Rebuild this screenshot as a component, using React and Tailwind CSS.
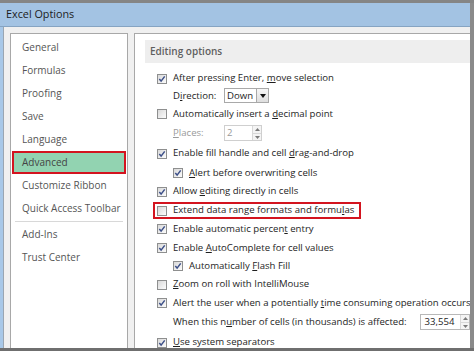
import React from "react";

function Box({ checked }) {
  return (
    <span className="w-[10px] h-[10px] border border-[#8e8f8f] bg-linear-to-br from-[#d9d9d9] to-[#fcfcfc] flex items-center justify-center shrink-0">
      {checked && (
        <svg width="8" height="8" viewBox="0 0 8 8">
          <path d="M1.3 4.1 L3.1 6.1 L6.7 1.4" fill="none" stroke="#3c4f88" strokeWidth="1.5" />
        </svg>
      )}
    </span>
  );
}

function Row({ h, checked, indent, children, extra }) {
  return (
    <div className={`relative flex items-center shrink-0 ${h} ${indent ? "pl-[16px]" : ""}`}>
      <Box checked={checked} />
      <span className="ml-[6px] whitespace-nowrap">{children}</span>
      {extra}
    </div>
  );
}

function Spin() {
  return (
    <div className="flex flex-col w-[9px] h-full border-l border-[#d8d8d8] bg-[#f4f4f4]">
      <div className="flex-1 flex items-center justify-center border-b border-[#d8d8d8]">
        <svg width="5" height="3" viewBox="0 0 5 3"><path d="M0 3 L2.5 0 L5 3 Z" fill="#7a7a7a" /></svg>
      </div>
      <div className="flex-1 flex items-center justify-center">
        <svg width="5" height="3" viewBox="0 0 5 3"><path d="M0 0 L2.5 3 L5 0 Z" fill="#7a7a7a" /></svg>
      </div>
    </div>
  );
}

const nav = ["General", "Formulas", "Proofing", "Save", "Language"];

export default function App() {
  return (
    <div className="w-[474px] h-[351px] overflow-hidden flex flex-col bg-[#f0f0f0] font-['Open_Sans',sans-serif]">
      <div className="h-[3px] bg-[#858585] shrink-0" />
      <div className="flex flex-1 min-h-0">
        <div className="flex-1 flex flex-col min-w-0">
          <div className="h-[24px] shrink-0 bg-[#a3c3e3] border-b border-[#86a4c2] flex items-center pl-[6px] text-[10.8px] text-[#1c1c1c]">
            Excel Options
          </div>
          <div className="flex flex-1 min-h-0">
            <div className="w-[3px] bg-[#a8c8e8] border-r border-[#9aa6b2] box-content" />
            <div className="flex flex-1 min-w-0 pl-[6px] pt-[6px] gap-[6px]">
              <div className="w-[118px] shrink-0 bg-white border border-b-0 border-[#a8a8a8] pt-[2px] px-[1px] text-[10px] text-[#555]">
                {nav.map((n) => (
                  <div key={n} className="h-[23px] flex items-center pl-[10px]">{n}</div>
                ))}
                <div className="h-[23px] flex items-center pl-[8px] bg-[#92d3b1] border-2 border-[#d3141f] text-[#444]">Advanced</div>
                <div className="h-[23px] flex items-center pl-[10px]">Customize Ribbon</div>
                <div className="h-[23px] flex items-center pl-[10px]">Quick Access Toolbar</div>
                <div className="mx-[3px] my-[1px] h-px bg-[#d8d8d8]" />
                <div className="h-[23px] flex items-center pl-[10px]">Add-Ins</div>
                <div className="h-[23px] flex items-center pl-[10px]">Trust Center</div>
              </div>
              <div className="flex-1 min-w-0 bg-white border border-r-0 border-b-0 border-[#a8a8a8] pt-[6px] pl-[10px] overflow-hidden text-[9.6px] text-[#1e1e1e]">
                <div className="h-[23px] bg-[#eeeeee] flex items-center pl-[5px] font-semibold text-[10px] text-[#5f5f5f]">
                  Editing options
                </div>
                <div className="pl-[12px] pt-[7px] flex flex-col">
                  <Row h="h-[17px]" checked>
                    After pressing Enter, <u>m</u>ove selection
                  </Row>
                  <div className="h-[17.5px] flex items-center pl-[16px] shrink-0">
                    <span className="w-[51px]">D<u>i</u>rection:</span>
                    <div className="w-[45px] h-[15px] border border-[#a9a9a9] flex items-center bg-white">
                      <span className="flex-1 pl-[2px]">Down</span>
                      <div className="w-[12px] h-full border-l border-[#a9a9a9] bg-linear-to-b from-[#f7f7f7] to-[#dedede] flex items-center justify-center">
                        <svg width="6" height="4" viewBox="0 0 6 4"><path d="M0 0 L3 4 L6 0 Z" fill="#111" /></svg>
                      </div>
                    </div>
                  </div>
                  <Row h="h-[18.5px]">
                    Automatically insert a <u>d</u>ecimal point
                  </Row>
                  <div className="h-[20.5px] flex items-center pl-[16px] shrink-0 text-[#9a9a9a]">
                    <span className="w-[51px]"><u>P</u>laces:</span>
                    <div className="w-[38px] h-[16px] border border-[#cfcfcf] flex items-center bg-white">
                      <span className="flex-1 pl-[2px]">2</span>
                      <Spin />
                    </div>
                  </div>
                  <Row h="h-[20px]" checked>
                    Enable fill handle and cell <u>d</u>rag-and-drop
                  </Row>
                  <Row h="h-[18.5px]" checked indent>
                    <u>A</u>lert before overwriting cells
                  </Row>
                  <Row h="h-[19px]" checked>
                    Allow <u>e</u>diting directly in cells
                  </Row>
                  <Row
                    h="h-[19px]"
                    extra={<div className="absolute left-[-4px] top-[1px] w-[208px] h-[17px] border-2 border-[#d3141f]" />}
                  >
                    Extend data range formats and formu<u>l</u>as
                  </Row>
                  <Row h="h-[18.5px]" checked>
                    Enable automatic percen<u>t</u> entry
                  </Row>
                  <Row h="h-[18.5px]" checked>
                    Enable <u>A</u>utoComplete for cell values
                  </Row>
                  <Row h="h-[18.5px]" checked indent>
                    Automatically <u>F</u>lash Fill
                  </Row>
                  <Row h="h-[18px]">
                    <u>Z</u>oom on roll with IntelliMouse
                  </Row>
                  <Row h="h-[18.5px]" checked>
                    Alert the user when a potentially <u>t</u>ime consuming operation occurs
                  </Row>
                  <div className="h-[20.5px] flex items-center pl-[16px] shrink-0">
                    <span className="w-[250px] whitespace-nowrap">When this n<u>u</u>mber of cells (in thousands) is affected:</span>
                    <div className="w-[50px] h-[16px] border border-[#b8b8b8] flex items-center bg-white">
                      <span className="flex-1 pl-[3px]">33,554</span>
                      <Spin />
                    </div>
                  </div>
                  <Row h="h-[20px]" checked>
                    <u>U</u>se system separators
                  </Row>
                </div>
              </div>
            </div>
          </div>
        </div>
        <div className="w-[4px] bg-[#8a8a8a] shrink-0" />
      </div>
      <div className="h-[3px] bg-[#6f6f6f] shrink-0" />
    </div>
  );
}
